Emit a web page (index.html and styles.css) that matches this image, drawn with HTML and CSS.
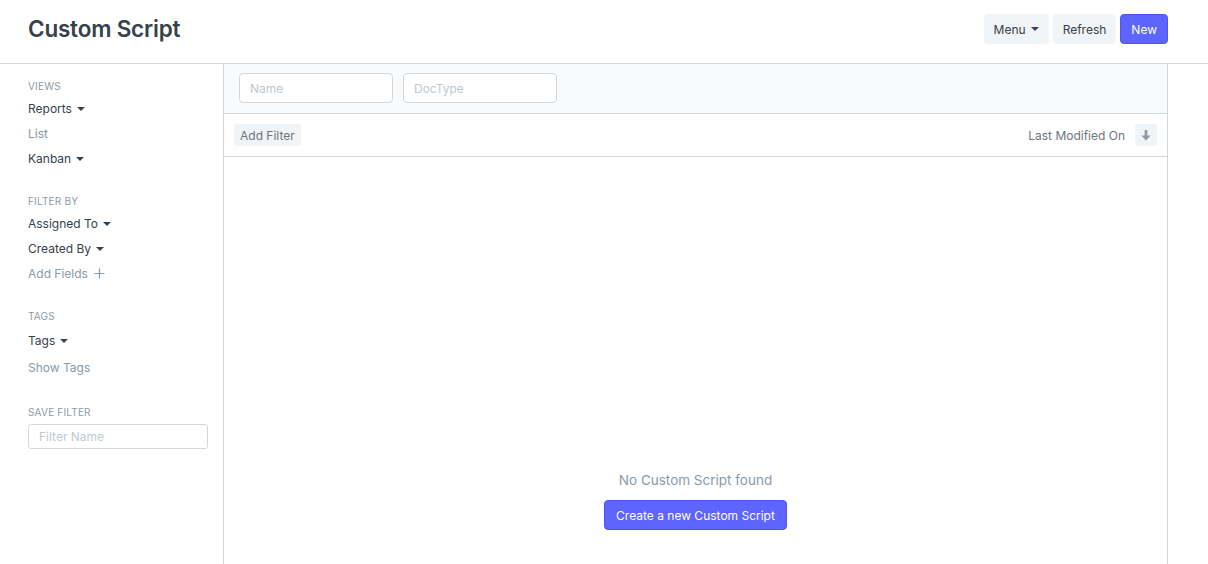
FILE: index.html
```html
<!DOCTYPE html>
<html lang="en">
<head>
  <meta charset="UTF-8">
  <title>Custom Script</title>
  <link rel="stylesheet" href="styles.css">
</head>
<body>

<header class="page-head">
  <h1 class="page-title">Custom Script</h1>
  <div class="page-actions">
    <button class="btn">Menu <span class="caret"></span></button>
    <button class="btn">Refresh</button>
    <button class="btn btn-primary">New</button>
  </div>
</header>

<div class="page-body">
  <!-- sidebar -->
  <aside class="sidebar">
    <div class="side-group">
      <div class="side-label">Views</div>
      <div class="side-item">Reports <span class="caret"></span></div>
      <div class="side-item muted">List</div>
      <div class="side-item">Kanban <span class="caret"></span></div>
    </div>
    <div class="side-group">
      <div class="side-label">Filter By</div>
      <div class="side-item">Assigned To <span class="caret"></span></div>
      <div class="side-item">Created By <span class="caret"></span></div>
      <div class="side-item muted">Add Fields
        <svg class="plus" width="11" height="11" viewBox="0 0 11 11"><path d="M5.5 0.5v10M0.5 5.5h10" stroke="#8d99a6" stroke-width="1.2" fill="none"/></svg>
      </div>
    </div>
    <div class="side-group">
      <div class="side-label">Tags</div>
      <div class="side-item first">Tags <span class="caret"></span></div>
      <div class="side-item muted tall">Show Tags</div>
    </div>
    <div class="side-group save">
      <div class="side-label">Save Filter</div>
      <input class="side-input" type="text" placeholder="Filter Name">
    </div>
  </aside>

  <!-- list -->
  <main class="list">
    <div class="std-filters">
      <input class="filter-input" type="text" placeholder="Name">
      <input class="filter-input" type="text" placeholder="DocType">
    </div>
    <div class="filter-bar">
      <button class="btn-xs">Add Filter</button>
      <div class="sort">
        <span class="sort-label">Last Modified On</span>
        <button class="btn-xs sort-btn">
          <svg width="10" height="11" viewBox="0 0 10 11"><path d="M3.6 0h2.8v5.5H9.5L5 10.5 0.5 5.5h3.1z" fill="#8d99a6"/></svg>
        </button>
      </div>
    </div>
    <div class="empty">
      <p class="empty-text">No Custom Script found</p>
      <button class="btn btn-primary">Create a new Custom Script</button>
    </div>
  </main>
</div>

</body>
</html>
```

FILE: styles.css
```css
:root {
  --text: #36414c;
  --muted: #8d99a6;
  --border: #d1d8dd;
  --light: #f0f4f7;
  --primary: #5e64ff;
}
* {
  box-sizing: border-box;
}
body {
  margin: 0;
  font-family: Inter, "Noto Sans", sans-serif;
  font-size: 13px;
  color: var(--text);
  background: #fff;
}

/* header */
.page-head {
  height: 64px;
  border-bottom: 1px solid var(--border);
  display: flex;
  align-items: center;
  justify-content: space-between;
  padding: 0 40px 0 28px;
}
.page-title {
  margin: -6px 0 0;
  font-size: 22.5px;
  font-weight: 600;
  color: var(--text);
  letter-spacing: -0.2px;
}
.page-actions {
  display: flex;
  gap: 4px;
  margin-top: -5px;
}
.btn {
  height: 30px;
  padding: 0 10px;
  border: none;
  border-radius: 4px;
  background: var(--light);
  color: var(--text);
  font-family: inherit;
  font-size: 12px;
  display: inline-flex;
  align-items: center;
  gap: 3px;
}
.btn-primary {
  background: var(--primary);
  color: #fff;
  border: 1px solid #4f55f0;
}
.caret {
  display: inline-block;
  width: 0;
  height: 0;
  border-left: 4px solid transparent;
  border-right: 4px solid transparent;
  border-top: 4px solid var(--text);
  margin-left: 2px;
  vertical-align: middle;
}

/* layout */
.page-body {
  display: flex;
  padding-right: 40px;
}
.sidebar {
  width: 223px;
  flex-shrink: 0;
  padding: 14px 15px 0 28px;
}
.side-group {
  margin-bottom: 22px;
}
.side-group.save {
  padding-top: 2px;
}
.side-label {
  height: 16px;
  line-height: 16px;
  font-size: 10px;
  text-transform: uppercase;
  color: var(--muted);
  margin-bottom: 2px;
  letter-spacing: 0.2px;
}
.side-item {
  height: 25px;
  line-height: 25px;
  font-size: 12px;
  display: flex;
  align-items: center;
  gap: 3px;
}
.side-item.first {
  margin-top: 4px;
}
.side-item.muted {
  color: var(--muted);
}
.side-item.tall {
  margin-top: 2px;
}
.plus {
  margin-left: 3px;
}
.side-input {
  display: block;
  width: 180px;
  height: 25px;
  margin-top: 4px;
  border: 1px solid var(--border);
  border-radius: 3px;
  padding: 0 10px;
  font-family: inherit;
  font-size: 12px;
}
.side-input::placeholder,
.filter-input::placeholder {
  color: #c0c8d0;
}

/* list */
.list {
  flex: 1;
  border-left: 1px solid var(--border);
  border-right: 1px solid var(--border);
  min-height: 500px;
}
.std-filters {
  display: flex;
  gap: 10px;
  height: 50px;
  padding: 9px 15px;
  background: #f9fafb;
  border-bottom: 1px solid var(--border);
}
.filter-input {
  width: 154px;
  height: 30px;
  border: 1px solid var(--border);
  border-radius: 4px;
  padding: 0 10px;
  font-family: inherit;
  font-size: 12px;
  background: #fff;
}
.filter-bar {
  height: 43px;
  display: flex;
  align-items: center;
  justify-content: space-between;
  padding: 0 10px;
  border-bottom: 1px solid var(--border);
}
.btn-xs {
  height: 22px;
  padding: 0 6px;
  border: none;
  border-radius: 3px;
  background: var(--light);
  color: #6c7680;
  font-family: inherit;
  font-size: 12px;
}
.sort {
  display: flex;
  align-items: center;
  gap: 10px;
}
.sort-label {
  color: #6c7680;
  font-size: 12px;
}
.sort-btn {
  width: 22px;
  padding: 0;
  display: flex;
  align-items: center;
  justify-content: center;
}
.empty {
  padding-top: 313px;
  text-align: center;
}
.empty-text {
  margin: 0 0 10px;
  line-height: 20px;
  font-size: 13.5px;
  color: var(--muted);
}
.empty .btn {
  padding: 0 11px;
}
```
